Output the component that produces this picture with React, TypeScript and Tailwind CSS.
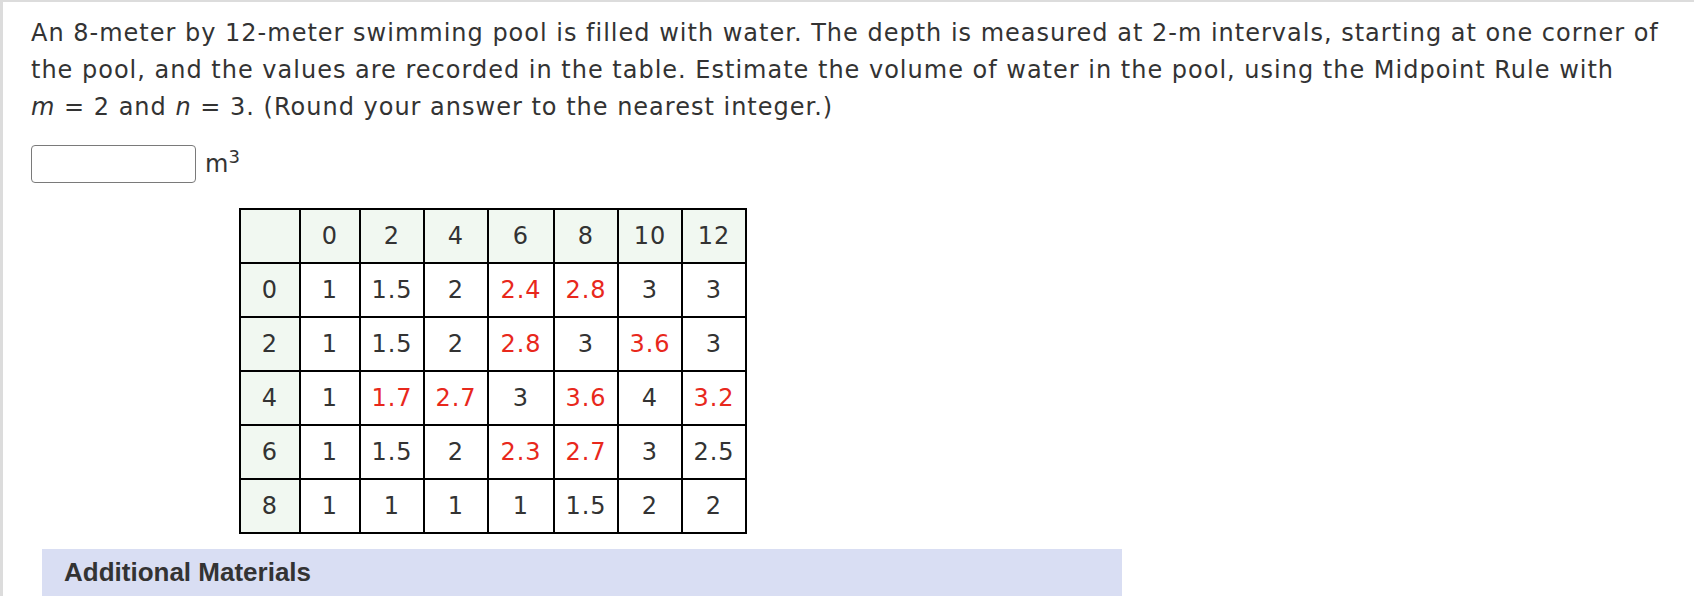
const colHeads = ["0", "2", "4", "6", "8", "10", "12"];
const colWidths = ["w-[60px]", "w-[60px]", "w-[64px]", "w-[64px]", "w-[66px]", "w-[64px]", "w-[64px]", "w-[64px]"];

// each cell: [value, isRed]
const rows: { head: string; cells: [string, boolean][] }[] = [
    { head: "0", cells: [["1", false], ["1.5", false], ["2", false], ["2.4", true], ["2.8", true], ["3", false], ["3", false]] },
    { head: "2", cells: [["1", false], ["1.5", false], ["2", false], ["2.8", true], ["3", false], ["3.6", true], ["3", false]] },
    { head: "4", cells: [["1", false], ["1.7", true], ["2.7", true], ["3", false], ["3.6", true], ["4", false], ["3.2", true]] },
    { head: "6", cells: [["1", false], ["1.5", false], ["2", false], ["2.3", true], ["2.7", true], ["3", false], ["2.5", false]] },
    { head: "8", cells: [["1", false], ["1", false], ["1", false], ["1", false], ["1.5", false], ["2", false], ["2", false]] },
];

const DepthTable = () => {
    return (
        <table className="table-fixed border-collapse border-2 border-black text-[24px] tracking-[1px] text-[#333]">
            <colgroup>
                {colWidths.map((w, i) => <col key={i} className={w} />)}
            </colgroup>
            <thead>
                <tr className="h-[54px] bg-[#f1f8f1]">
                    <th className="border-2 border-black font-normal"></th>
                    {colHeads.map((h) => (
                        <th key={h} className="border-2 border-black font-normal text-center">{h}</th>
                    ))}
                </tr>
            </thead>
            <tbody>
                {rows.map((row) => (
                    <tr key={row.head} className="h-[54px]">
                        <td className="border-2 border-black bg-[#f1f8f1] text-center">{row.head}</td>
                        {row.cells.map(([v, red], i) => (
                            <td key={i} className={red ? "border-2 border-black text-center text-[#e8281c]" : "border-2 border-black text-center"}>{v}</td>
                        ))}
                    </tr>
                ))}
            </tbody>
        </table>
    );
};

const App = () => {
    return (
        <div className="min-h-screen bg-white border-l-[3px] border-t-[2px] border-[#dcdcdc] font-['DejaVu_Sans',Verdana,sans-serif] text-[#333]">
            <div className="pl-[28px] pt-[13px]">
                <p className="text-[24px] leading-[37px] tracking-[1px]">
                    An 8-meter by 12-meter swimming pool is filled with water. The depth is measured at 2-m intervals, starting at one corner of the pool, and the values are recorded in the table. Estimate the volume of water in the pool, using the Midpoint Rule with{" "}
                    <span className="whitespace-nowrap"><i>m</i> = 2</span> and <span className="whitespace-nowrap"><i>n</i> = 3</span>. (Round your answer to the nearest integer.)
                </p>

                <div className="flex items-center gap-[9px] mt-[19px]">
                    <input type="text" className="w-[165px] h-[38px] border-[1.5px] border-[#7a7a7a] rounded-[4px] bg-white" />
                    <span className="text-[24px]">m<sup className="text-[18px]">3</sup></span>
                </div>

                <div className="mt-[25px] ml-[208px]">
                    <DepthTable />
                </div>
            </div>

            <div className="ml-[39px] mt-[15px] w-[1080px] h-[60px] bg-[#d9def3] pl-[22px] pt-[4px]">
                <span className="font-['Liberation_Sans',Arial,sans-serif] font-bold text-[26px] text-[#333]">Additional Materials</span>
            </div>
        </div>
    );
};

export default App;
